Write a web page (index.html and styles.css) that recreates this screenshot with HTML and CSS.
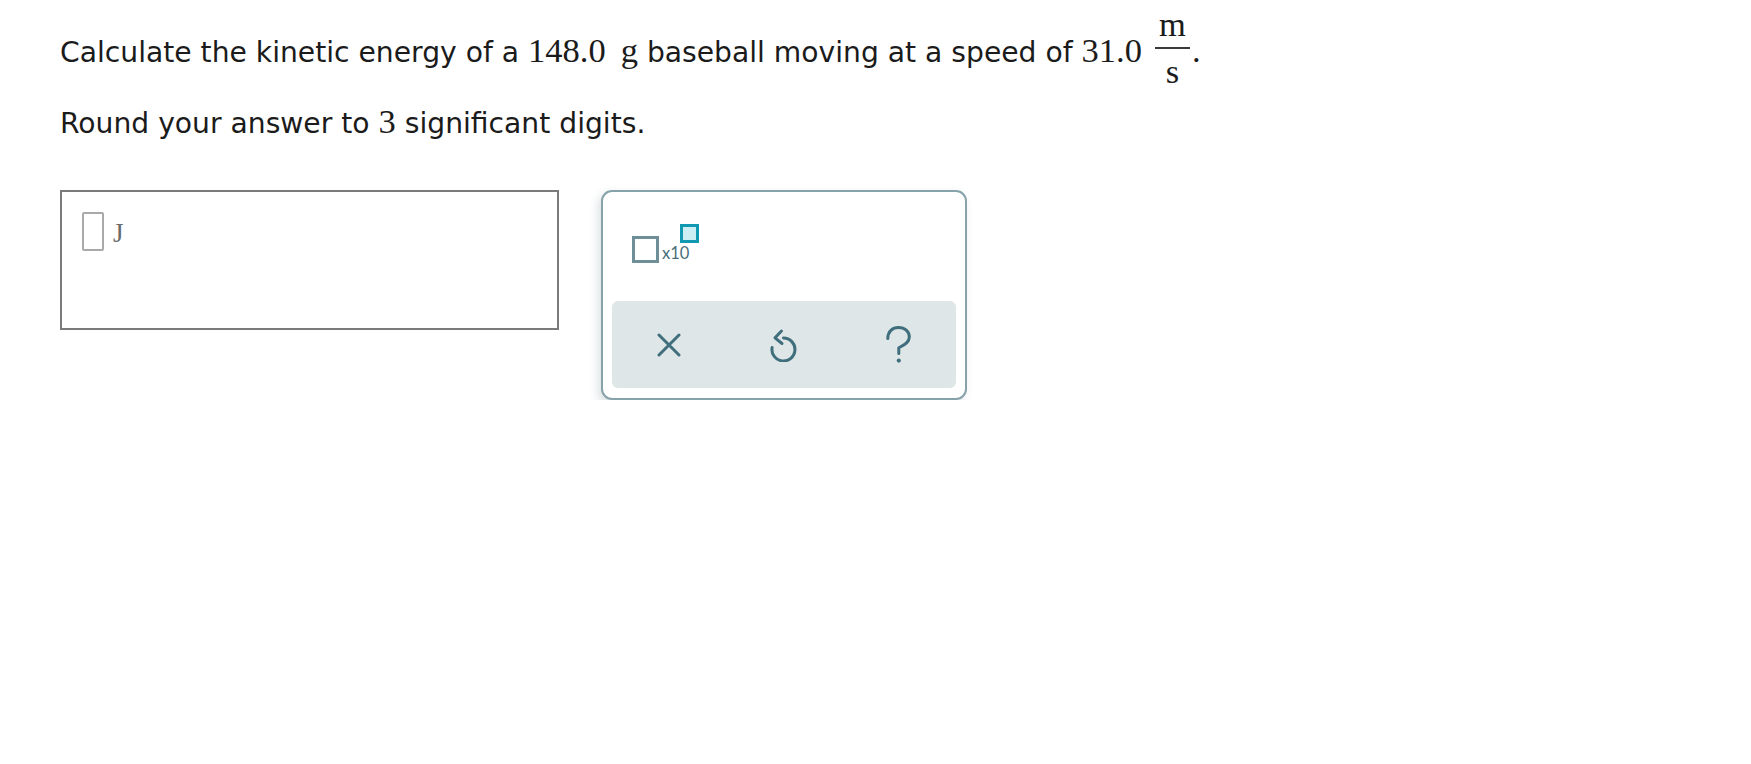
FILE: index.html
```html
<!DOCTYPE html>
<html>
<head>
<meta charset="utf-8">
<link rel="stylesheet" href="styles.css">
</head>
<body>
<div class="question">
  <p class="line line1">Calculate the kinetic energy of a <span class="m">148.0</span> <span class="m unit-g">g</span> baseball moving at a speed of <span class="m">31.0</span> <span class="frac m"><span class="num">m</span><span class="bar"></span><span class="den">s</span></span><span class="m">.</span></p>
  <p class="line line2">Round your answer to <span class="m">3</span> significant digits.</p>
  <div class="answer-row">
    <div class="answer-box">
      <span class="slot"></span>
      <span class="unit">J</span>
    </div>
    <div class="keypad">
      <div class="keypad-top">
        <div class="sci">
          <span class="sci-box"></span>
          <span class="sci-text">x10</span>
          <span class="sci-sup"></span>
        </div>
      </div>
      <div class="keypad-actions">
        <div class="action">
          <svg width="24" height="24" viewBox="0 0 24 24"><path d="M2 2 L22 22 M22 2 L2 22" fill="none" stroke="#3f6e7c" stroke-width="3" stroke-linecap="round"/></svg>
        </div>
        <div class="action">
          <svg width="28" height="34" viewBox="0 0 28 34"><path d="M13.5 10 A11.5 11.5 0 1 1 2.1 19.6" fill="none" stroke="#3f6e7c" stroke-width="3" stroke-linecap="round"/><path d="M11.5 3 L5 9.8 L12 15.5" fill="none" stroke="#3f6e7c" stroke-width="3" stroke-linecap="round" stroke-linejoin="round"/></svg>
        </div>
        <div class="action">
          <svg width="26" height="38" viewBox="0 0 26 38"><path d="M1.8 12.5 C1.8 5.5 6.5 1.5 12.5 1.5 C18.8 1.5 23.3 5.5 23.3 11 C23.3 16.5 18.5 18.5 12.8 21.8 L12.8 27.5" fill="none" stroke="#3f6e7c" stroke-width="3" stroke-linecap="round" stroke-linejoin="round"/><circle cx="12.8" cy="34.6" r="2.1" fill="#3f6e7c"/></svg>
        </div>
      </div>
    </div>
  </div>
</div>
</body>
</html>
```

FILE: styles.css
```css
html, body {
  margin: 0;
  padding: 0;
  background: #ffffff;
}

body {
  font-family: "DejaVu Sans", "Liberation Sans", sans-serif;
  font-size: 28.2px;
  color: #1b1b1b;
}

.question {
  padding: 0 0 0 60px;
}

.line {
  margin: 0;
  line-height: 32px;
  white-space: nowrap;
}

.line1 {
  padding-top: 10px;
}

.line2 {
  margin-top: 20px;
}

.m {
  font-family: "Liberation Serif", "Times New Roman", serif;
  font-size: 34.5px;
}

.unit-g {
  margin-left: 6px;
}

.frac {
  display: inline-block;
  vertical-align: -21px;
  text-align: center;
  padding: 0 2px 0 4px;
}

.num,
.den {
  display: block;
  line-height: 28px;
}

.bar {
  display: block;
  height: 2px;
  margin-top: 9px;
  background: #3a3a3a;
  width: 35px;
}

.den {
  margin-top: 8px;
}

.answer-row {
  display: flex;
  align-items: flex-start;
  gap: 42px;
  margin-top: 50px;
}

.answer-box {
  box-sizing: border-box;
  width: 499px;
  height: 140px;
  border: 2px solid #7b7b7b;
  padding: 20px 0 0 20px;
  display: flex;
  align-items: flex-start;
}

.slot {
  box-sizing: border-box;
  width: 22px;
  height: 39px;
  border: 2px solid #a9a9a9;
  border-radius: 2px;
}

.unit {
  font-family: "Liberation Serif", "Times New Roman", serif;
  font-size: 27px;
  color: #6a6a6a;
  margin-left: 9px;
  margin-top: 6px;
  line-height: 30px;
}

.keypad {
  box-sizing: border-box;
  width: 366px;
  height: 210px;
  border: 2px solid #86a2aa;
  border-radius: 11px;
  background: #ffffff;
  padding: 0 9px 10px 9px;
  box-shadow: -3px 4px 10px rgba(60, 90, 100, 0.18);
  display: flex;
  flex-direction: column;
}

.keypad-top {
  height: 109px;
  padding: 32px 0 0 20px;
  box-sizing: border-box;
}

.sci {
  display: inline-flex;
  align-items: flex-end;
  height: 39px;
}

.sci-box {
  box-sizing: border-box;
  width: 27px;
  height: 27px;
  border: 3px solid #6e8f98;
}

.sci-text {
  font-family: Lato, "Open Sans", sans-serif;
  font-size: 16.5px;
  line-height: 16px;
  color: #4a6f7a;
  margin-left: 3px;
  margin-bottom: 2px;
}

.sci-sup {
  box-sizing: border-box;
  width: 19px;
  height: 19px;
  border: 3px solid #1198b2;
  background: #cdeef3;
  align-self: flex-start;
  margin-left: -9px;
}

.keypad-actions {
  flex: 1;
  background: #dfe6e8;
  border-radius: 6px;
  display: flex;
}

.action {
  flex: 1;
  display: flex;
  align-items: center;
  justify-content: center;
}

.action svg {
  display: block;
}
```
